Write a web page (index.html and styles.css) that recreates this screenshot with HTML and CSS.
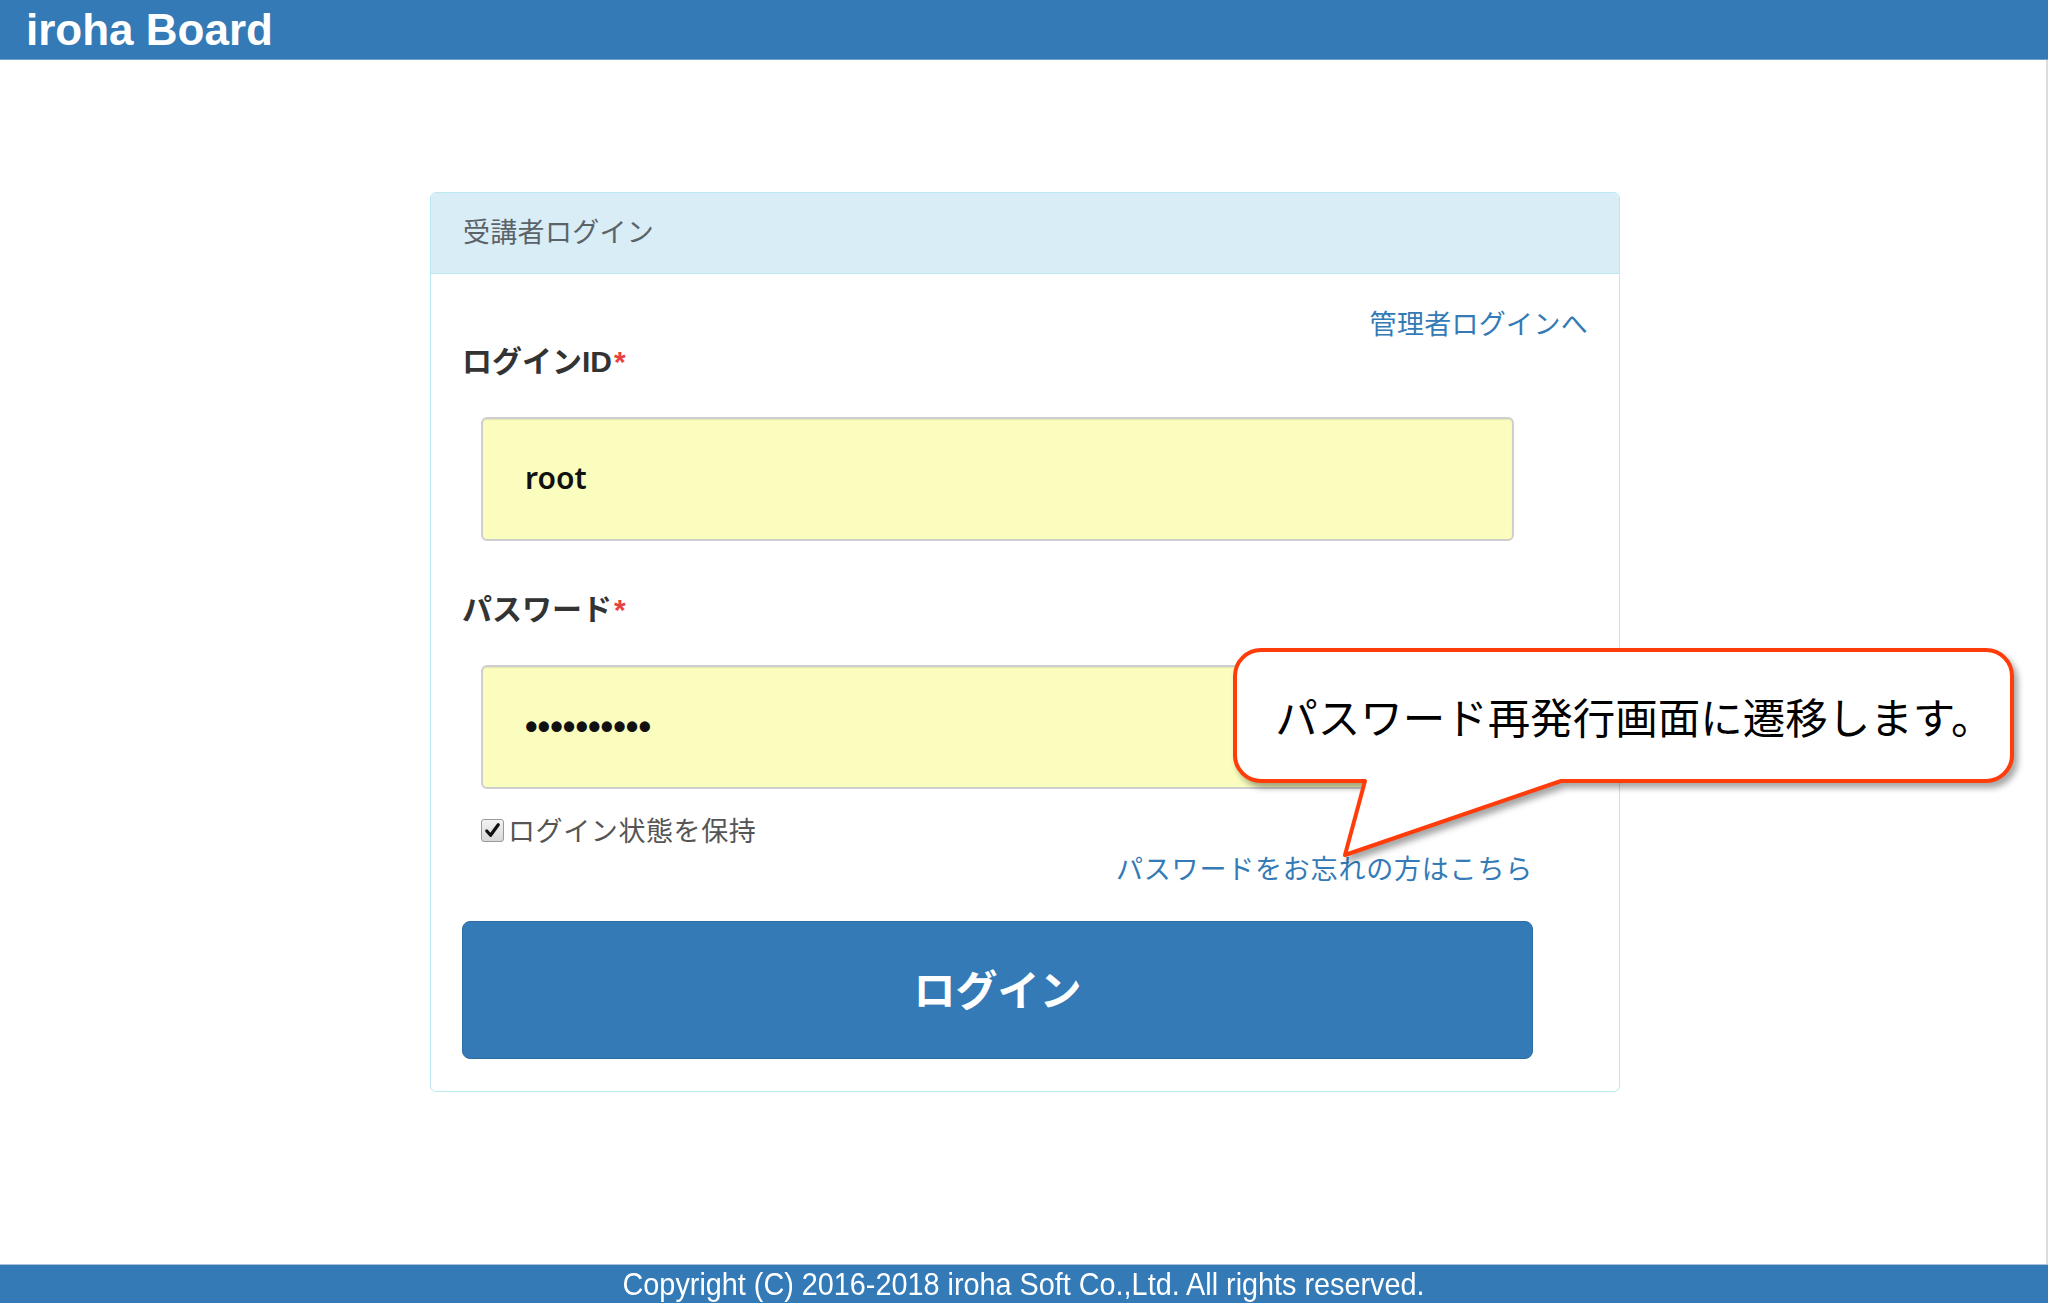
FILE: index.html
```html
<!DOCTYPE html>
<html lang="ja">

<head>
    <meta charset="UTF-8">
    <meta name="viewport" content="width=device-width, initial-scale=1.0">
    <title>iroha Board - 受講者ログイン</title>
    <link rel="stylesheet" href="styles.css">
</head>

<body>
    <div class="page">
        <header class="navbar">
            <span class="brand">iroha Board</span>
        </header>

        <main class="main">
            <div class="panel">
                <div class="panel-heading">受講者ログイン</div>
                <div class="panel-body">
                    <div class="admin-link"><a href="#">管理者ログインへ</a></div>

                    <form class="login-form">
                        <div class="form-group">
                            <label for="username">ログインID<span class="required">*</span></label>
                            <input type="text" id="username" class="form-control text-input" value="root" readonly>
                        </div>
                        <div class="form-group">
                            <label for="password">パスワード<span class="required">*</span></label>
                            <input type="password" id="password" class="form-control pass-input" value="abcdefghij" readonly>
                        </div>

                        <div class="remember">
                            <span class="check">
                                <svg viewBox="0 0 22 22" width="22" height="22">
                                    <path d="M5 11.5 L9 16 L17 5" fill="none" stroke="#111" stroke-width="3.4" stroke-linecap="round" stroke-linejoin="round"/>
                                </svg>
                            </span>
                            <span>ログイン状態を保持</span>
                        </div>
                        <div class="forgot-link"><a href="#">パスワードをお忘れの方はこちら</a></div>

                        <button type="button" class="btn-login">ログイン</button>
                    </form>
                </div>
            </div>
        </main>

        <footer class="footer"><span class="copyright">Copyright (C) 2016-2018 iroha Soft Co.,Ltd. All rights reserved.</span></footer>
    </div>

    <!-- 説明用の吹き出し -->
    <div class="balloon">
        <svg class="balloon-shape" viewBox="0 0 800 220" width="800" height="220">
            <path d="M33 6 H758 A26 26 0 0 1 784 32 V111 A26 26 0 0 1 758 137 H333 L117 211 L137 137 H33 A26 26 0 0 1 7 111 V32 A26 26 0 0 1 33 6 Z"
                fill="#fff" stroke="#ff3c0a" stroke-width="4" stroke-linejoin="round"/>
        </svg>
        <div class="balloon-text">パスワード再発行画面に遷移します。</div>
    </div>
</body>

</html>
```

FILE: styles.css
```css
body {
    margin: 0;
    font-family: "Liberation Sans", "Noto Sans CJK JP", sans-serif;
    background-color: #fff;
    color: #333;
}

a {
    color: #337ab7;
    text-decoration: none;
}

.page {
    display: flex;
    flex-direction: column;
    min-height: 100vh;
}

.navbar {
    height: 60px;
    background-color: #337ab7;
    border-bottom: 1px solid #6f9fcc;
    box-sizing: border-box;
}

.brand {
    display: block;
    padding-left: 26px;
    line-height: 60px;
    font-size: 44px;
    font-weight: bold;
    color: #fff;
}

.main {
    flex: 1;
    padding: 132px 0 0 4px;
    border-right: 2px solid #dcdcdc;
}

.panel {
    width: 1190px;
    margin: 0 auto;
    border: 1px solid #bce8f1;
    border-radius: 6px;
    box-sizing: border-box;
}

.panel-heading {
    height: 81px;
    padding-left: 32px;
    background-color: #d9edf7;
    border-bottom: 1px solid #bce8f1;
    border-radius: 5px 5px 0 0;
    box-sizing: border-box;
    line-height: 76px;
    font-family: "Noto Sans CJK JP", sans-serif;
    font-size: 27px;
    letter-spacing: 0.3px;
    color: #5b6368;
}

.panel-body {
    padding: 31px 31px 32px 31px;
}

.admin-link {
    text-align: right;
    line-height: 36px;
    font-family: "Noto Sans CJK JP", sans-serif;
    font-size: 27px;
    letter-spacing: 0.3px;
}

.login-form {
    width: 1071px;
    margin-top: 3px;
}

.form-group + .form-group {
    margin-top: 51px;
}

.form-group label {
    display: block;
    line-height: 36px;
    margin-bottom: 37px;
    font-size: 30px;
    font-weight: bold;
    color: #333;
}

.required {
    color: #e8413f;
    font-family: "Liberation Sans", sans-serif;
    margin-left: 2px;
}

.form-control {
    display: block;
    width: calc(100% - 38px);
    height: 124px;
    margin: 0 19px;
    padding: 0 42px;
    box-sizing: border-box;
    background-color: #fafdbe;
    border: 2px solid #cfcfcf;
    border-radius: 6px;
    box-shadow: inset 0 1px 1px rgba(0, 0, 0, 0.08);
    color: #111;
    outline: none;
}

.text-input {
    font-family: "Noto Sans", sans-serif;
    font-size: 30px;
    font-weight: 600;
    padding-bottom: 3px;
}

.pass-input {
    font-family: "Liberation Sans", sans-serif;
    font-size: 36px;
    font-weight: bold;
}

.remember {
    display: flex;
    align-items: center;
    gap: 4px;
    margin-top: 23px;
    padding-left: 19px;
    line-height: 36px;
    font-family: "Noto Sans CJK JP", sans-serif;
    font-size: 27px;
    letter-spacing: 0.6px;
    color: #555;
}

.check {
    display: flex;
    align-items: center;
    justify-content: center;
    width: 23px;
    height: 23px;
    box-sizing: border-box;
    border: 1px solid #9a9a9a;
    border-radius: 3px;
    background: linear-gradient(#f2f2f2, #d8d8d8);
}

.check svg {
    width: 21px;
    height: 21px;
}

.forgot-link {
    margin-top: 2px;
    text-align: right;
    line-height: 36px;
    font-family: "Noto Sans CJK JP", sans-serif;
    font-size: 27px;
    letter-spacing: 0.8px;
}

.btn-login {
    display: block;
    width: 100%;
    height: 138px;
    margin-top: 35px;
    padding-bottom: 6px;
    background-color: #337ab7;
    border: 1px solid #2e6da4;
    border-radius: 8px;
    color: #fff;
    font-family: "Noto Sans CJK JP", sans-serif;
    font-size: 42px;
    font-weight: bold;
    cursor: pointer;
}

.footer {
    height: 39px;
    background-color: #337ab7;
    border-top: 1px solid #a9c3de;
    box-sizing: border-box;
    text-align: center;
    line-height: 38px;
    color: #fff;
}

.copyright {
    display: inline-block;
    font-family: "Liberation Sans", sans-serif;
    font-size: 32px;
    transform: scaleX(0.9);
}

.balloon {
    position: absolute;
    left: 1228px;
    top: 644px;
    width: 800px;
    height: 220px;
}

.balloon-shape {
    position: absolute;
    left: 0;
    top: 0;
    filter: drop-shadow(4px 5px 3px rgba(0, 0, 0, 0.35));
}

.balloon-text {
    position: relative;
    width: 793px;
    padding-left: 20px;
    box-sizing: border-box;
    line-height: 143px;
    text-align: center;
    font-family: "Noto Sans CJK JP", sans-serif;
    font-size: 42.5px;
    color: #000;
}
```
